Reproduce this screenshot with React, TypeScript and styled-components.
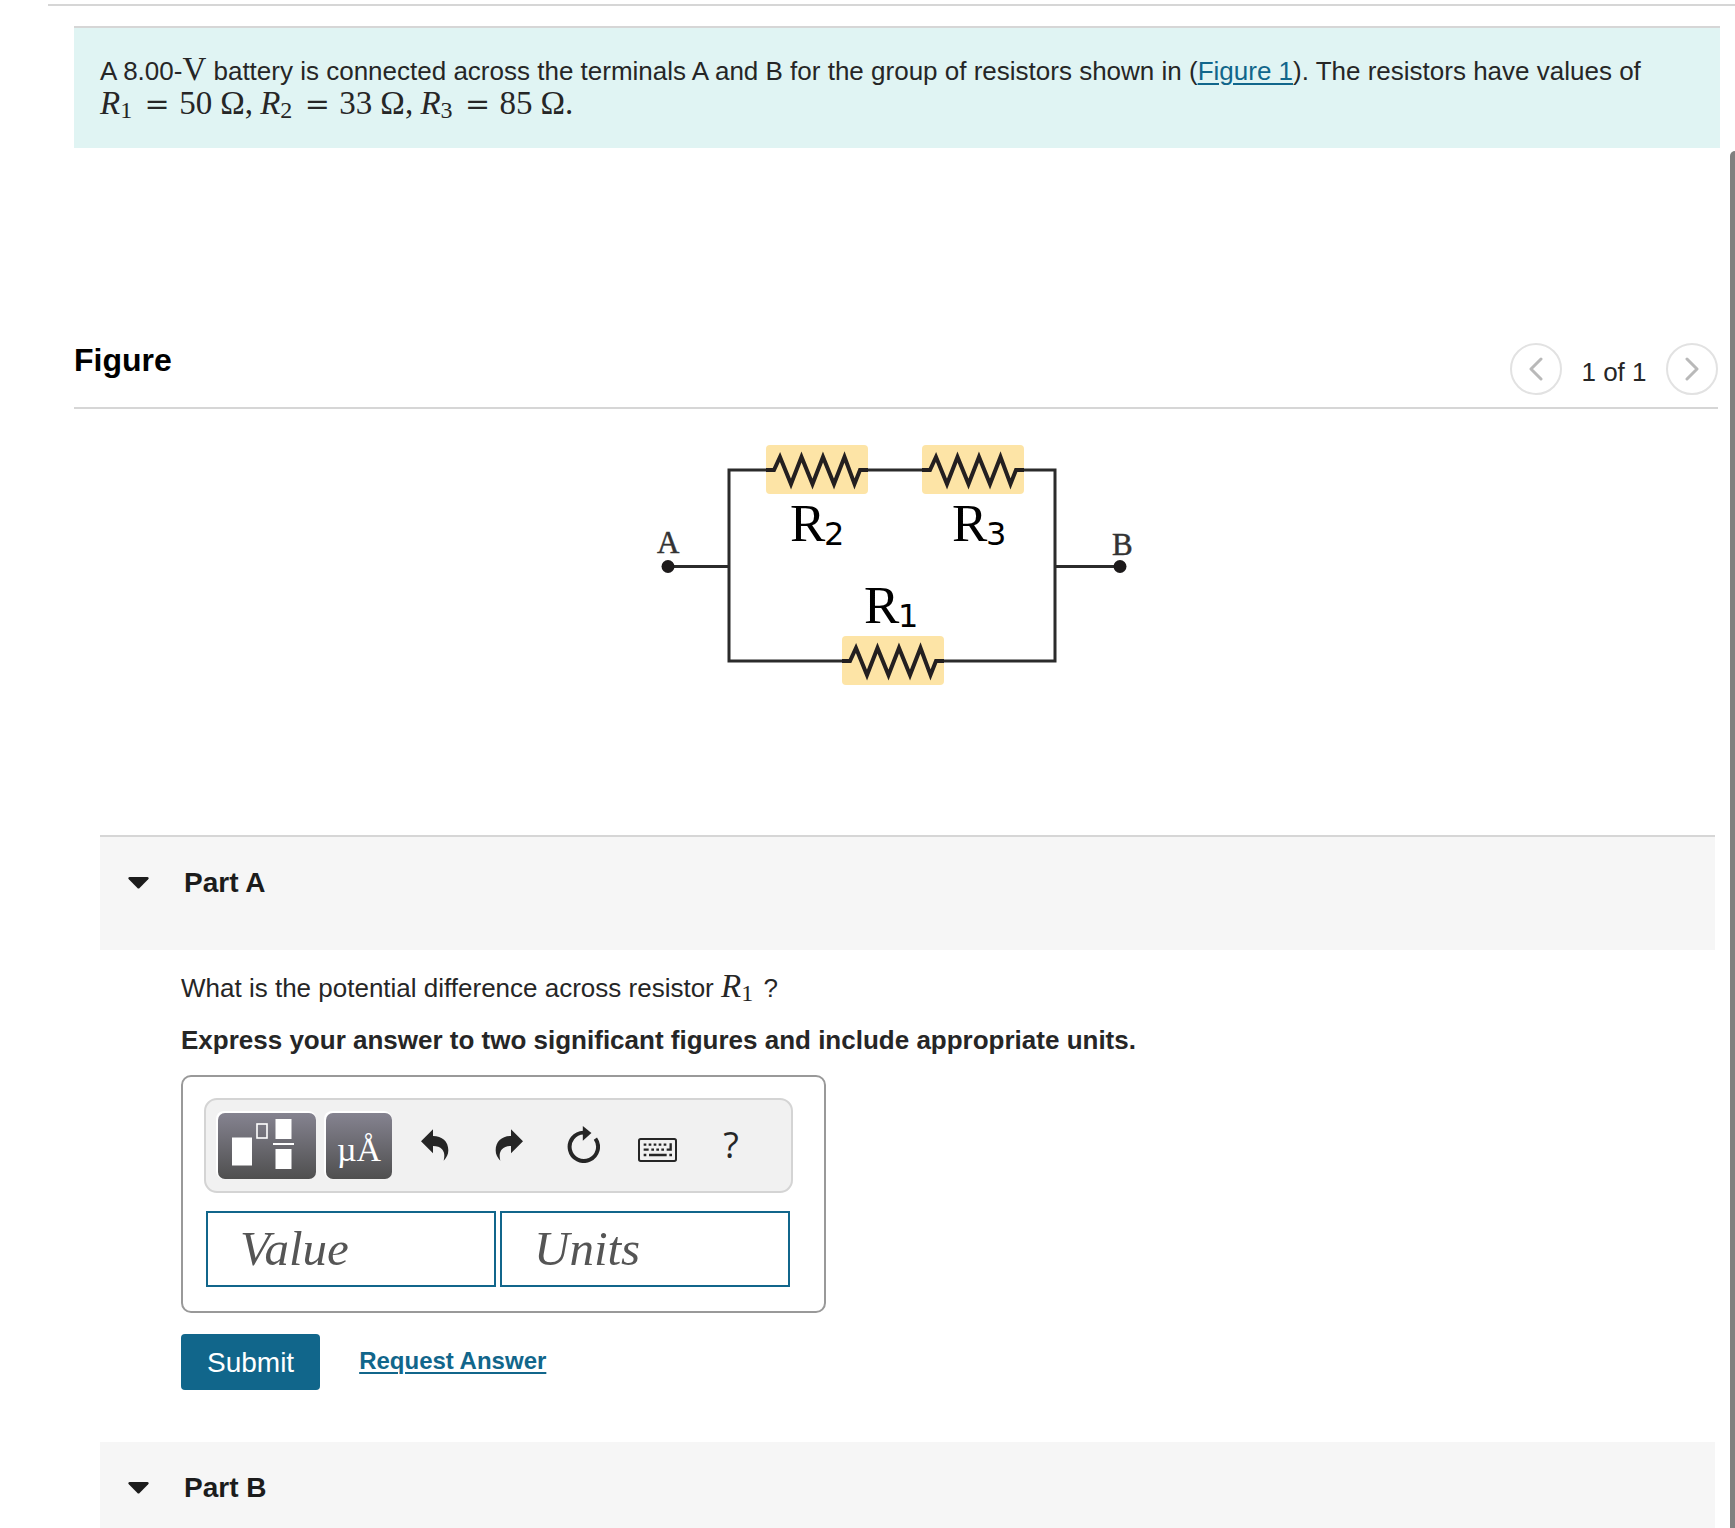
import React from "react";
import styled, { createGlobalStyle } from "styled-components";

const color = {
  text: "#262626",
  rule: "#d6d6d6",
  link: "#11668b",
  problem: "#e0f4f3",
  band: "#f6f6f6",
};

const sans = `"Liberation Sans", Arial, Helvetica, sans-serif`;
const serif = `"Liberation Serif", "Times New Roman", serif`;

const GlobalStyle = createGlobalStyle`
  * { box-sizing: border-box; }
  html, body { margin: 0; background: #fff; }
  body { font-family: ${sans}; font-size: 26px; line-height: 34px; color: ${color.text}; }
  h2, h3, p { margin: 0; }
  button, input { font-family: inherit; }
`;

const Page = styled.main`
  display: flex;
  flex-direction: column;
  min-height: 100vh;
  padding-top: 4px;
`;

const TopRule = styled.hr`
  width: auto;
  margin: 0 0 20px 48px;
  border: 0;
  border-top: 2px solid ${color.rule};
`;

const Problem = styled.section`
  margin: 0 15px 0 74px;
  padding: 26px;
  border-top: 2px solid ${color.rule};
  background: ${color.problem};
`;

const Link = styled.a<{ $strong?: boolean }>`
  color: ${color.link};
  font-size: ${(p) => (p.$strong ? "24px" : "inherit")};
  font-weight: ${(p) => (p.$strong ? 700 : 400)};
  text-decoration: underline;
  text-decoration-thickness: 2px;
  text-underline-offset: 3px;
`;

const MathText = styled.span<{ $italic?: boolean }>`
  font-family: ${serif};
  font-size: 33px;
  line-height: 0;
  font-style: ${(p) => (p.$italic ? "italic" : "normal")};
  white-space: nowrap;
`;

const Subscript = styled.sub`
  display: inline-block;
  width: 15px;
  font-size: 24px;
  font-style: normal;
  line-height: 0;
  vertical-align: -4px;
`;

const Equals = styled.span`
  display: inline-block;
  width: 44px;
  font-family: "DejaVu Serif", serif;
  font-size: 30px;
  line-height: 0;
  text-align: center;
`;

const Unit = styled.span`
  margin-left: 8px;
`;

const FigureHeader = styled.header`
  display: flex;
  justify-content: space-between;
  margin: 192px 17px 0 74px;
  padding-bottom: 12px;
  border-bottom: 2px solid ${color.rule};
`;

const FigureTitle = styled.h2`
  font-size: 32px;
  line-height: 40px;
  color: #000;
`;

const Pager = styled.nav`
  display: flex;
  align-items: center;
  padding-top: 3px;
`;

const PageCount = styled.span`
  width: 104px;
  padding-top: 6px;
  text-align: center;
`;

const RoundButton = styled.button`
  display: flex;
  align-items: center;
  justify-content: center;
  width: 52px;
  height: 52px;
  padding: 0;
  border: 2px solid #e2e2e2;
  border-radius: 50%;
  background: #fff;
`;

const FigureArea = styled.div`
  display: flex;
  justify-content: center;
  margin: 0 19px 0 74px;
  padding: 21px 0 135px;
`;

const PartHeader = styled.h3<{ $ruled?: boolean; $fill?: boolean }>`
  flex: ${(p) => (p.$fill ? "1 0 auto" : "none")};
  margin: 0 20px 0 100px;
  padding: 29px 28px ${(p) => (p.$fill ? "20px" : "50px")};
  border-top: ${(p) => (p.$ruled ? `2px solid ${color.rule}` : "0")};
  background: ${color.band};
`;

const PartToggle = styled.button`
  display: flex;
  align-items: center;
  gap: 35px;
  padding: 0;
  border: 0;
  background: none;
  color: #1c1c1c;
  font-size: 28px;
  font-weight: 700;
  line-height: 34px;
`;

const PartBody = styled.section`
  display: flex;
  flex-direction: column;
  align-items: flex-start;
  margin: 0 20px 0 181px;
  padding: 21px 0 52px;
  gap: 18px;
`;

const Instruction = styled.p`
  font-weight: 700;
`;

const AnswerBox = styled.div`
  display: flex;
  flex-direction: column;
  gap: 18px;
  padding: 21px 31px 24px 21px;
  border: 2px solid #999;
  border-radius: 10px;
`;

const Toolbar = styled.div`
  display: flex;
  align-items: center;
  width: 589px;
  height: 95px;
  padding: 0 12px;
  border: 2px solid #d4d4d4;
  border-radius: 13px;
  background: #f1f1f1;
`;

const Palettes = styled.div`
  display: flex;
  gap: 10px;
  margin-right: 6px;
`;

const PaletteButton = styled.button<{ $wide?: boolean }>`
  display: flex;
  align-items: center;
  justify-content: center;
  width: ${(p) => (p.$wide ? "98px" : "66px")};
  height: 66px;
  padding: ${(p) => (p.$wide ? "0" : "8px 0 0")};
  border: 0;
  border-radius: 7px;
  background: linear-gradient(#858390, #4f4f4f);
  box-shadow: -1px -1px 0 1px #fff;
  color: #fff;
  font-family: ${serif};
  font-size: 34px;
`;

const ToolButton = styled.button`
  display: flex;
  align-items: center;
  justify-content: center;
  width: 74px;
  height: 66px;
  padding: 0 0 2px;
  border: 0;
  background: none;
  color: ${color.text};
  font-family: "Open Sans", sans-serif;
  font-size: 36px;
`;

const Fields = styled.div`
  display: flex;
  gap: 4px;
  padding-left: 2px;
`;

const Field = styled.input`
  width: 290px;
  height: 76px;
  padding: 0 32px 2px;
  border: 2px solid ${color.link};
  border-radius: 0;
  background: #fff;
  color: #555;
  font-family: ${serif};
  font-size: 49px;
  font-style: italic;
  &::placeholder { color: #555; opacity: 1; }
`;

const Actions = styled.div`
  display: flex;
  align-items: flex-start;
  gap: 39px;
  padding-top: 3px;
`;

const RequestSlot = styled.div`
  padding-top: 9px;
`;

const SubmitButton = styled.button`
  height: 56px;
  padding: 1px 26px 0;
  border: 0;
  border-radius: 4px;
  background: ${color.link};
  color: #fff;
  font-size: 28px;
  line-height: 34px;
`;

const ScrollThumb = styled.div`
  position: fixed;
  top: 151px;
  right: 0;
  bottom: 0;
  width: 5px;
  border-top-left-radius: 5px;
  background: #808080;
`;

function Resistance({ index, value, end }: { index: number; value: number; end: string }) {
  return (
    <MathText>
      <Symbol index={index} />
      <Equals>=</Equals>
      {value}
      <Unit>Ω</Unit>
      {end}
    </MathText>
  );
}

function Symbol({ index }: { index: number }) {
  return (
    <MathText $italic>
      R<Subscript>{index}</Subscript>
    </MathText>
  );
}

function Chevron({ right }: { right?: boolean }) {
  return (
    <svg width="14" height="24" viewBox="0 0 14 24" fill="none" stroke="#b9b9b9" strokeWidth="3" strokeLinecap="round" strokeLinejoin="round" aria-hidden="true">
      <path d={right ? "M2 2L12 12L2 22" : "M12 2L2 12L12 22"} />
    </svg>
  );
}

function Caret() {
  return (
    <svg width="21" height="12" viewBox="0 0 21 12" aria-hidden="true">
      <path d="M1.5 0H19.5Q21.5 .8 20.2 2.2L11.6 11Q10.5 12 9.4 11L.8 2.2Q-.5 .8 1.5 0Z" fill="#1c1c1c" />
    </svg>
  );
}

function Resistor({ x, y }: { x: number; y: number }) {
  return (
    <g transform={`translate(${x} ${y})`}>
      <rect x="-8" y="-25" width="102" height="49" rx="4" fill="#fde4a6" />
      <path d="M-8 0H0L6 -13L17 14L27.500 -13L38.500 14L49 -13L60 14L70.500 -13L80.500 14L86 0H94" fill="none" stroke="#231f20" strokeWidth="4" />
    </g>
  );
}

function CircuitLabel({ x, y, index }: { x: number; y: number; index: number }) {
  return (
    <g fill="#000">
      <text x={x} y={y} fontFamily="Liberation Serif, serif" fontSize="53">R</text>
      <text x={x + 34} y={y + 4} fontFamily="DejaVu Sans, sans-serif" fontSize="32">{index}</text>
    </g>
  );
}

function Circuit() {
  return (
    <svg width="510" height="270" viewBox="0 0 510 270" role="img" aria-label="Resistors R2 and R3 in series, in parallel with R1, between terminals A and B">
      <path d="M28 136.500H89M415 136.500H480M89 40H415V231H89Z" fill="none" stroke="#2b2b2b" strokeWidth="3" />
      <circle cx="28" cy="136.500" r="6.500" fill="#1d1a1b" />
      <circle cx="480" cy="136.500" r="6.500" fill="#1d1a1b" />
      <Resistor x={134} y={40} />
      <Resistor x={290} y={40} />
      <Resistor x={210} y={231} />
      <CircuitLabel x={150} y={111} index={2} />
      <CircuitLabel x={312} y={111} index={3} />
      <CircuitLabel x={224} y={193} index={1} />
      <g fill="#333" stroke="#333" strokeWidth=".5" fontFamily="Liberation Serif, serif" fontSize="31">
        <text x="17" y="123">A</text>
        <text x="472" y="125">B</text>
      </g>
    </svg>
  );
}

function TemplateIcon() {
  return (
    <svg width="98" height="66" viewBox="0 0 98 66" fill="#fff" aria-hidden="true">
      <path d="M14 24.500H34V52.500H14ZM57.500 6H73.500V26H57.500ZM55 30H76V32H55ZM57.500 36H73.500V56H57.500Z" />
      <rect x="39" y="11" width="10" height="14" fill="none" stroke="#fff" strokeWidth="1.600" />
    </svg>
  );
}

function CurvedArrow({ forward }: { forward?: boolean }) {
  return (
    <svg width="28" height="32" viewBox="0 0 84 96" fill="currentColor" aria-hidden="true">
      <path
        transform={forward ? "translate(84 0) scale(-1 1)" : undefined}
        d="M0 37L36 1V21C63 21 82 37 82 64C82 76 77 86 68 95C72 79 70 69 63 61C57 54 48 51 36 51V73Z"
      />
    </svg>
  );
}

function ResetIcon() {
  return (
    <svg width="33" height="37" viewBox="0 0 98 112" fill="none" aria-hidden="true">
      <path d="M85 38A43 43 0 1 1 49 20" stroke="currentColor" strokeWidth="12" />
      <path d="M47 0L73 21L47 45Z" fill="currentColor" />
    </svg>
  );
}

function KeyboardIcon() {
  return (
    <svg width="39" height="34" viewBox="0 -30 117 102" fill="none" stroke="currentColor" aria-hidden="true">
      <rect x="3" y="3" width="111" height="66" rx="5" strokeWidth="6" />
      <path d="M17 20H86M40 35H86M17 51H25M94 51H102" strokeWidth="7" strokeDasharray="8 7" />
      <path d="M17 35H32M33 51H86" strokeWidth="7" />
      <path d="M98 16V35H87" strokeWidth="7" />
    </svg>
  );
}

export default function App() {
  return (
    <>
      <GlobalStyle />
      <Page>
        <TopRule />
        <Problem>
          <p>
            A 8.00-<MathText>V</MathText> battery is connected across the terminals A and B for the group of resistors shown in (
            <Link href="#figure">Figure 1</Link>). The resistors have values of{" "}
            <Resistance index={1} value={50} end="," /> <Resistance index={2} value={33} end="," />{" "}
            <Resistance index={3} value={85} end="." />
          </p>
        </Problem>

        <FigureHeader id="figure">
          <FigureTitle>Figure</FigureTitle>
          <Pager aria-label="Figures">
            <RoundButton aria-label="Previous figure"><Chevron /></RoundButton>
            <PageCount>1 of 1</PageCount>
            <RoundButton aria-label="Next figure"><Chevron right /></RoundButton>
          </Pager>
        </FigureHeader>
        <FigureArea><Circuit /></FigureArea>

        <PartHeader $ruled>
          <PartToggle aria-expanded="true"><Caret />Part A</PartToggle>
        </PartHeader>
        <PartBody>
          <p>
            What is the potential difference across resistor <Symbol index={1} /> ?
          </p>
          <Instruction>Express your answer to two significant figures and include appropriate units.</Instruction>
          <AnswerBox>
            <Toolbar role="toolbar" aria-label="Answer tools">
              <Palettes>
                <PaletteButton $wide aria-label="Templates"><TemplateIcon /></PaletteButton>
                <PaletteButton aria-label="Symbols">µÅ</PaletteButton>
              </Palettes>
              <ToolButton aria-label="Undo"><CurvedArrow /></ToolButton>
              <ToolButton aria-label="Redo"><CurvedArrow forward /></ToolButton>
              <ToolButton aria-label="Reset"><ResetIcon /></ToolButton>
              <ToolButton aria-label="Keyboard shortcuts"><KeyboardIcon /></ToolButton>
              <ToolButton aria-label="Help">?</ToolButton>
            </Toolbar>
            <Fields>
              <Field aria-label="Value" placeholder="Value" />
              <Field aria-label="Units" placeholder="Units" />
            </Fields>
          </AnswerBox>
          <Actions>
            <SubmitButton type="submit">Submit</SubmitButton>
            <RequestSlot>
              <Link $strong href="#answer">Request Answer</Link>
            </RequestSlot>
          </Actions>
        </PartBody>

        <PartHeader $fill>
          <PartToggle aria-expanded="true"><Caret />Part B</PartToggle>
        </PartHeader>
      </Page>
      <ScrollThumb />
    </>
  );
}
